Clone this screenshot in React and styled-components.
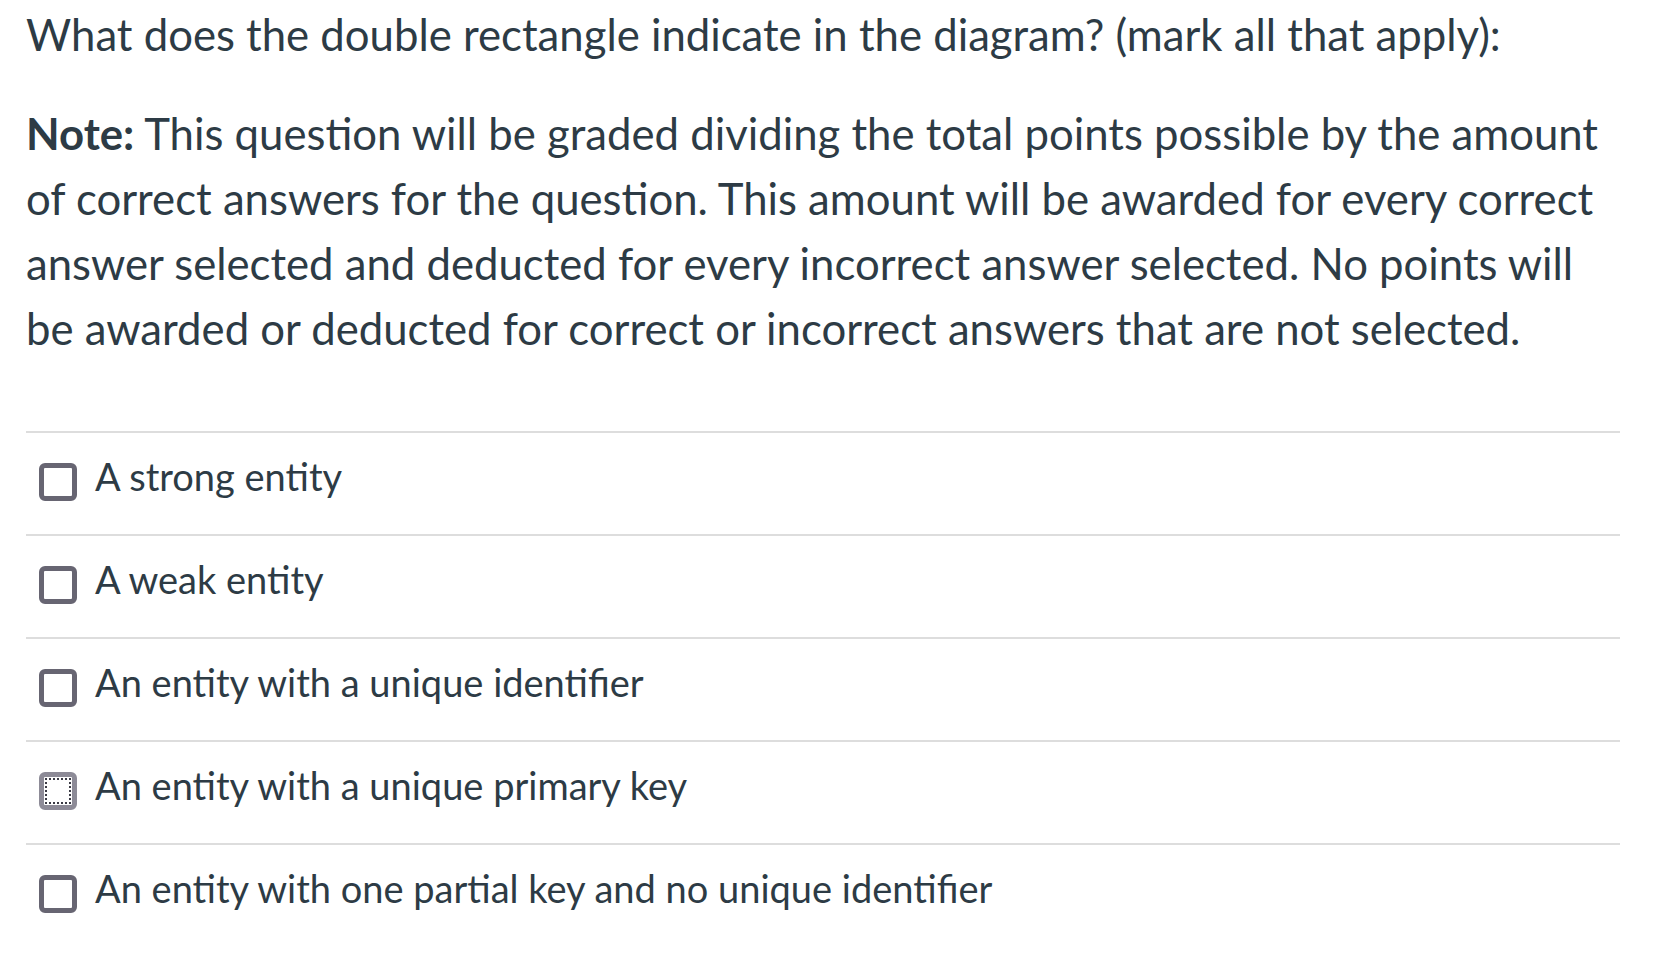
import React from "react";
import styled, {createGlobalStyle} from "styled-components";

const textColor = "#2d3b45";
const ruleColor = "#dddddd";

const GlobalStyle = createGlobalStyle`
  html, body {
    margin: 0;
    padding: 0;
    background: #ffffff;
  }
  body {
    font-family: Lato, "Open Sans", "Liberation Sans", sans-serif;
    color: ${textColor};
  }
`;

const Page = styled.div`
  padding: 2px 44px 0 26px;
`;

const QuestionTitle = styled.div`
  font-size: 43.7px;
  line-height: 65px;
`;

const NoteText = styled.p`
  margin: 34px 0 0 0;
  font-size: 43.7px;
  line-height: 65px;

  strong {
    font-weight: 700;
  }
`;

const AnswerList = styled.div`
  margin-top: 70px;
`;

const AnswerRow = styled.label`
  display: flex;
  align-items: flex-start;
  gap: 18px;
  height: 103px;
  padding: 20px 0 0 13px;
  border-top: 2px solid ${ruleColor};
  box-sizing: border-box;
  cursor: pointer;
`;

const Box = styled.span`
  position: relative;
  flex: none;
  width: 38px;
  height: 38px;
  margin-top: 10px;
  box-sizing: border-box;
  border: 5px solid ${props => (props.focused ? "#8d8b97" : "#676572")};
  border-radius: 6px;
  background: #ffffff;

  &::after {
    content: "";
    display: ${props => (props.focused ? "block" : "none")};
    position: absolute;
    inset: 1px;
    border: 2px dotted #3a3a44;
  }
`;

const AnswerText = styled.span`
  font-size: 38px;
  line-height: 46px;
`;

const answers = [
  "A strong entity",
  "A weak entity",
  "An entity with a unique identifier",
  "An entity with a unique primary key",
  "An entity with one partial key and no unique identifier",
];

export default function App() {
  return (
    <>
      <GlobalStyle/>
      <Page>
        <QuestionTitle>
          What does the double rectangle indicate in the diagram? (mark all that apply):
        </QuestionTitle>
        <NoteText>
          <strong>Note:</strong> This question will be graded dividing the total points possible by the amount
          of correct answers for the question. This amount will be awarded for every correct answer
          selected and deducted for every incorrect answer selected. No points will be awarded or
          deducted for correct or incorrect answers that are not selected.
        </NoteText>
        <AnswerList>
          {answers.map((a, i) => (
            <AnswerRow key={a}>
              <Box focused={i === 3}/>
              <AnswerText>{a}</AnswerText>
            </AnswerRow>
          ))}
        </AnswerList>
      </Page>
    </>
  );
}
